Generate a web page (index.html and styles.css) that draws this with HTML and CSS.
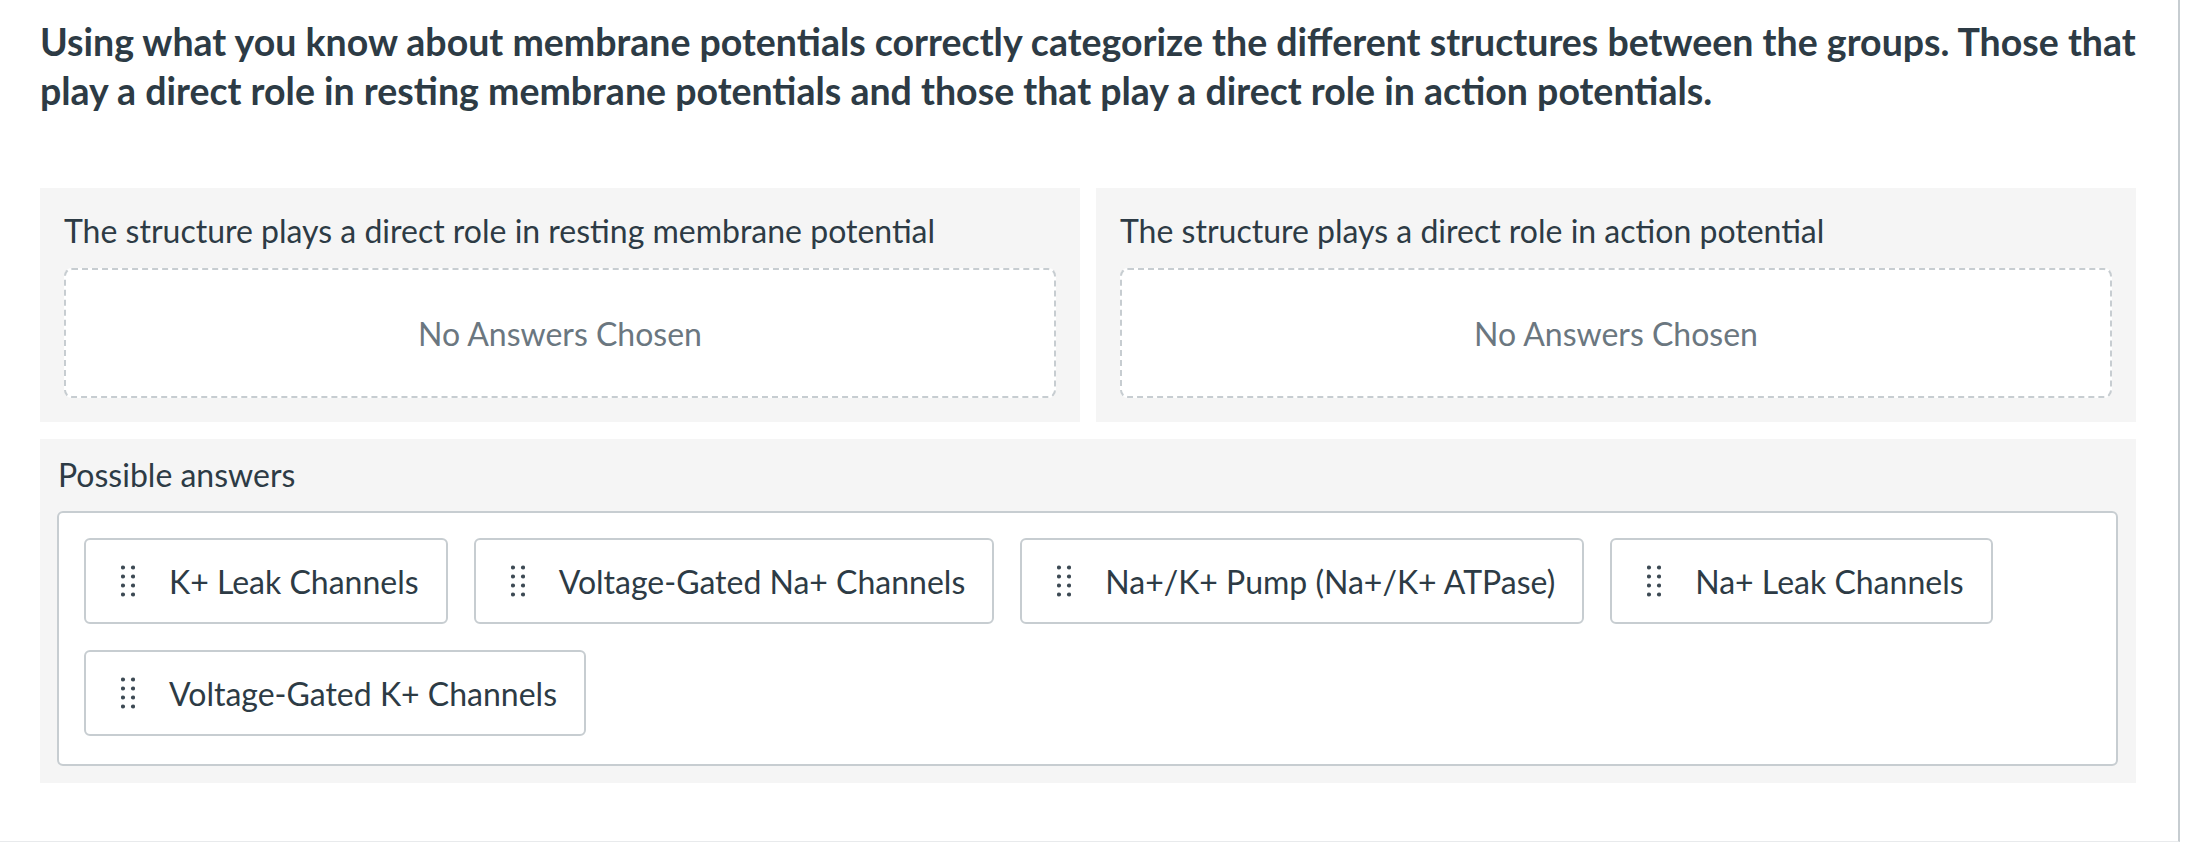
FILE: index.html
```html
<!DOCTYPE html>
<html lang="en">

<head>
    <meta charset="UTF-8">
    <meta name="viewport" content="width=device-width, initial-scale=1.0">
    <title>Categorization Question</title>
    <link rel="stylesheet" href="styles.css">
</head>

<body>

    <div class="question">
        <h1 class="question-text">Using what you know about membrane potentials correctly categorize the different structures between the groups. Those that play a direct role in resting membrane potentials and those that play a direct role in action potentials.</h1>

        <!-- Category drop zones -->
        <div class="groups">
            <div class="group">
                <h2 class="group-title">The structure plays a direct role in resting membrane potential</h2>
                <div class="drop-zone">No Answers Chosen</div>
            </div>
            <div class="group">
                <h2 class="group-title">The structure plays a direct role in action potential</h2>
                <div class="drop-zone">No Answers Chosen</div>
            </div>
        </div>

        <!-- Answer bank -->
        <div class="answers">
            <h2 class="answers-title">Possible answers</h2>
            <div class="answer-bank">
                <div class="answer">
                    <svg class="handle" viewBox="0 0 14 32"><circle cx="2" cy="2.5" r="2.1"/><circle cx="12" cy="2.5" r="2.1"/><circle cx="2" cy="11.5" r="2.1"/><circle cx="12" cy="11.5" r="2.1"/><circle cx="2" cy="20.5" r="2.1"/><circle cx="12" cy="20.5" r="2.1"/><circle cx="2" cy="29.5" r="2.1"/><circle cx="12" cy="29.5" r="2.1"/></svg>
                    <span>K+ Leak Channels</span>
                </div>
                <div class="answer">
                    <svg class="handle" viewBox="0 0 14 32"><circle cx="2" cy="2.5" r="2.1"/><circle cx="12" cy="2.5" r="2.1"/><circle cx="2" cy="11.5" r="2.1"/><circle cx="12" cy="11.5" r="2.1"/><circle cx="2" cy="20.5" r="2.1"/><circle cx="12" cy="20.5" r="2.1"/><circle cx="2" cy="29.5" r="2.1"/><circle cx="12" cy="29.5" r="2.1"/></svg>
                    <span>Voltage-Gated Na+ Channels</span>
                </div>
                <div class="answer">
                    <svg class="handle" viewBox="0 0 14 32"><circle cx="2" cy="2.5" r="2.1"/><circle cx="12" cy="2.5" r="2.1"/><circle cx="2" cy="11.5" r="2.1"/><circle cx="12" cy="11.5" r="2.1"/><circle cx="2" cy="20.5" r="2.1"/><circle cx="12" cy="20.5" r="2.1"/><circle cx="2" cy="29.5" r="2.1"/><circle cx="12" cy="29.5" r="2.1"/></svg>
                    <span>Na+/K+ Pump (Na+/K+ ATPase)</span>
                </div>
                <div class="answer">
                    <svg class="handle" viewBox="0 0 14 32"><circle cx="2" cy="2.5" r="2.1"/><circle cx="12" cy="2.5" r="2.1"/><circle cx="2" cy="11.5" r="2.1"/><circle cx="12" cy="11.5" r="2.1"/><circle cx="2" cy="20.5" r="2.1"/><circle cx="12" cy="20.5" r="2.1"/><circle cx="2" cy="29.5" r="2.1"/><circle cx="12" cy="29.5" r="2.1"/></svg>
                    <span>Na+ Leak Channels</span>
                </div>
                <div class="answer">
                    <svg class="handle" viewBox="0 0 14 32"><circle cx="2" cy="2.5" r="2.1"/><circle cx="12" cy="2.5" r="2.1"/><circle cx="2" cy="11.5" r="2.1"/><circle cx="12" cy="11.5" r="2.1"/><circle cx="2" cy="20.5" r="2.1"/><circle cx="12" cy="20.5" r="2.1"/><circle cx="2" cy="29.5" r="2.1"/><circle cx="12" cy="29.5" r="2.1"/></svg>
                    <span>Voltage-Gated K+ Channels</span>
                </div>
            </div>
        </div>
    </div>

</body>

</html>
```

FILE: styles.css
```css
body {
    font-family: Lato, 'Open Sans', sans-serif;
    color: #2d3b45;
    background-color: #fff;
    margin: 0;
    padding: 0;
}

.question {
    width: 2180px;
    box-sizing: border-box;
    padding: 17px 42px 58px 40px;
    border-right: 2px solid #c7cdd1;
    border-bottom: 1px solid #e8eaec;
}

.question-text {
    font-size: 37.5px;
    font-weight: bold;
    line-height: 49px;
    margin: 0 0 73px 0;
}

.groups {
    display: grid;
    grid-template-columns: 1fr 1fr;
    gap: 16px;
}

.group {
    background-color: #f5f5f5;
    padding: 24px;
}

.group-title {
    font-size: 32px;
    font-weight: normal;
    line-height: 38px;
    margin: 0 0 18px 0;
}

.drop-zone {
    height: 130px;
    box-sizing: border-box;
    background-color: #fff;
    border: 2px dashed #c7cdd1;
    border-radius: 8px;
    display: flex;
    justify-content: center;
    align-items: center;
    font-size: 32px;
    color: #6b7780;
}

.answers {
    background-color: #f5f5f5;
    margin-top: 17px;
    padding: 16px 18px 17px 17px;
}

.answers-title {
    font-size: 32px;
    font-weight: normal;
    line-height: 39px;
    margin: 0 0 17px 1px;
}

.answer-bank {
    background-color: #fff;
    border: 2px solid #c7cdd1;
    border-radius: 6px;
    padding: 12px 12px 15px;
    display: flex;
    flex-wrap: wrap;
}

.answer {
    height: 86px;
    box-sizing: border-box;
    margin: 13px;
    padding: 0 27px 0 35px;
    border: 2px solid #c7cdd1;
    border-radius: 6px;
    background-color: #fff;
    display: flex;
    align-items: center;
    gap: 34px;
    font-size: 32px;
}

.answer .handle {
    width: 14px;
    height: 32px;
    fill: #3d4a54;
}
```
